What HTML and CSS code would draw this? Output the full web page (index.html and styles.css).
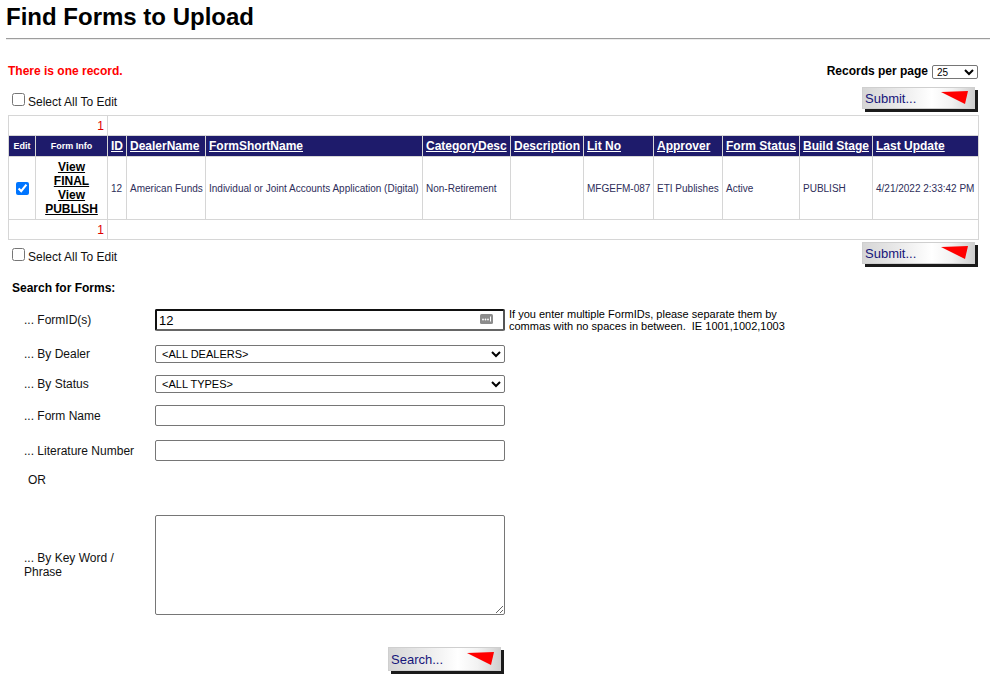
FILE: index.html
```html
<!DOCTYPE html>
<html>
<head>
<meta charset="utf-8">
<title>Find Forms to Upload</title>
<link rel="stylesheet" href="styles.css">
</head>
<body>
<h1 class="title">Find Forms to Upload</h1>
<div class="rule"></div>
<div class="content">
  <div class="toolbar">
    <span class="msg">There is one record.</span>
    <label class="rpp"><span>Records per page</span><select class="rpp-select"><option>25</option><option>50</option><option>100</option></select></label>
  </div>

  <div class="actions">
    <label class="selall"><input type="checkbox"><span>Select All To Edit</span></label>
    <button class="fancy" type="button"><span>Submit...</span><svg class="wedge" width="27" height="13" viewBox="0 0 27 13"><polygon points="0,1 27,0 24,13" fill="#ff0000"/></svg></button>
  </div>

  <table class="grid">
    <colgroup>
      <col class="w-edit"><col class="w-info"><col class="w-id"><col class="w-dealer"><col class="w-short"><col class="w-cat"><col class="w-desc"><col class="w-lit"><col class="w-appr"><col class="w-status"><col class="w-stage"><col class="w-upd">
    </colgroup>
    <tr class="pager"><td colspan="2" class="pg">1</td><td colspan="10"></td></tr>
    <tr class="head">
      <th class="mini">Edit</th>
      <th class="mini">Form Info</th>
      <th><a href="#">ID</a></th>
      <th><a href="#">DealerName</a></th>
      <th><a href="#">FormShortName</a></th>
      <th><a href="#">CategoryDesc</a></th>
      <th><a href="#">Description</a></th>
      <th><a href="#">Lit No</a></th>
      <th><a href="#">Approver</a></th>
      <th><a href="#">Form Status</a></th>
      <th><a href="#">Build Stage</a></th>
      <th><a href="#">Last Update</a></th>
    </tr>
    <tr class="data">
      <td class="center"><input type="checkbox" checked></td>
      <td class="center info"><a href="#">View<br>FINAL</a><br><a href="#">View<br>PUBLISH</a></td>
      <td>12</td>
      <td>American Funds</td>
      <td>Individual or Joint Accounts Application (Digital)</td>
      <td>Non-Retirement</td>
      <td></td>
      <td>MFGEFM-087</td>
      <td>ETI Publishes</td>
      <td>Active</td>
      <td>PUBLISH</td>
      <td>4/21/2022 2:33:42 PM</td>
    </tr>
    <tr class="pager"><td colspan="2" class="pg">1</td><td colspan="10"></td></tr>
  </table>

  <div class="actions actions-bottom">
    <label class="selall"><input type="checkbox"><span>Select All To Edit</span></label>
    <button class="fancy" type="button"><span>Submit...</span><svg class="wedge" width="27" height="13" viewBox="0 0 27 13"><polygon points="0,1 27,0 24,13" fill="#ff0000"/></svg></button>
  </div>

  <div class="search-head">Search for Forms:</div>

  <div class="row row-id">
    <div class="lbl">... FormID(s)</div>
    <div class="ctl">
      <input class="txt focus" type="text" value="12">
      <span class="pm-icon"><svg width="13" height="10" viewBox="0 0 13 10"><rect x="0" y="0" width="13" height="10" rx="1.5" fill="#8c8c8c"/><circle cx="3" cy="5.5" r="0.9" fill="#fff"/><circle cx="5.5" cy="5.5" r="0.9" fill="#fff"/><circle cx="8" cy="5.5" r="0.9" fill="#fff"/><rect x="10" y="2.5" width="1" height="5" fill="#fff"/></svg></span>
    </div>
    <div class="help">If you enter multiple FormIDs, please separate them by commas with no spaces in between.&nbsp; IE 1001,1002,1003</div>
  </div>

  <div class="row row-dealer">
    <div class="lbl">... By Dealer</div>
    <select class="sel"><option>&lt;ALL DEALERS&gt;</option></select>
  </div>

  <div class="row row-status">
    <div class="lbl">... By Status</div>
    <select class="sel"><option>&lt;ALL TYPES&gt;</option></select>
  </div>

  <div class="row row-name">
    <div class="lbl">... Form Name</div>
    <input class="txt" type="text">
  </div>

  <div class="row row-lit">
    <div class="lbl">... Literature Number</div>
    <input class="txt" type="text">
  </div>

  <div class="or">OR</div>

  <div class="row row-key">
    <div class="lbl">... By Key Word / Phrase</div>
    <textarea class="area"></textarea>
  </div>

  <div class="search-row">
    <button class="fancy tall" type="button"><span>Search...</span><svg class="wedge" width="27" height="13" viewBox="0 0 27 13"><polygon points="0,1 27,0 24,13" fill="#ff0000"/></svg></button>
  </div>
</div>
</body>
</html>
```

FILE: styles.css
```css
* { box-sizing: border-box; }

body {
  margin: 0;
  font-family: "Liberation Sans", Arial, sans-serif;
  color: #000;
  background: #fff;
}

.title {
  margin: 3px 0 0 6px;
  font-size: 24px;
  line-height: 27px;
  font-weight: bold;
}

.rule {
  margin: 8px 0 0 6px;
  border-top: 1px solid #9d9d9d;
  border-bottom: 1px solid #ececec;
}

.content {
  margin-left: 8px;
  width: 970px;
}

.toolbar {
  display: flex;
  justify-content: space-between;
  align-items: flex-start;
  margin-top: 24px;
}

.msg {
  color: #ff0000;
  font-weight: bold;
  font-size: 12px;
  line-height: 14px;
}

.rpp {
  display: flex;
  align-items: flex-start;
  font-weight: bold;
  font-size: 12px;
  line-height: 14px;
}

.rpp-select {
  margin: 1px 0 0 4px;
  width: 46px;
  height: 14px;
  font-family: "Liberation Sans", Arial, sans-serif;
  font-size: 10px;
  padding: 0;
  border: 1px solid #767676;
  border-radius: 2px;
  background: #fff;
  color: #000;
}

.actions {
  display: flex;
  justify-content: space-between;
  align-items: center;
  margin-top: 8px;
  height: 25px;
}

.actions-bottom {
  margin-top: 2px;
}

.selall {
  display: flex;
  align-items: center;
  font-size: 12px;
  line-height: 14px;
  color: #111;
}

.selall input {
  margin: 3px 3px 3px 4px;
}

.selall span {
  padding-top: 4px;
}

.fancy {
  display: flex;
  align-items: center;
  justify-content: space-between;
  width: 113px;
  height: 22px;
  margin: 0 3px 3px 0;
  padding: 0 6px 0 2px;
  border: 1px solid #cfcfcf;
  border-radius: 0;
  background: linear-gradient(to right, #d6d6d6 0%, #ececec 35%, #ffffff 62%, #f2f2f2 80%, #cfcfcf 100%);
  box-shadow: 3px 3px 0 #1b1b1b;
  font-family: "Liberation Sans", Arial, sans-serif;
  font-size: 13px;
  line-height: 14px;
  color: #16157a;
  cursor: pointer;
}

.fancy span {
  padding-top: 1px;
}

.wedge {
  display: block;
  margin-top: -1px;
}

.tall {
  height: 24px;
}

.grid {
  border-collapse: collapse;
  table-layout: fixed;
  width: 970px;
  margin-top: 3px;
  font-size: 10px;
  color: #2e2e5a;
}

.grid td,
.grid th {
  border: 1px solid #d6d6d6;
  padding: 0 3px;
  overflow: hidden;
}

.w-edit { width: 27px; }
.w-info { width: 72px; }
.w-id { width: 19px; }
.w-dealer { width: 79px; }
.w-short { width: 217px; }
.w-cat { width: 88px; }
.w-desc { width: 73px; }
.w-lit { width: 70px; }
.w-appr { width: 69px; }
.w-status { width: 77px; }
.w-stage { width: 73px; }
.w-upd { width: 106px; }

.grid .pager td {
  height: 20px;
}

.grid .pg {
  text-align: right;
  color: #e00000;
  font-size: 12px;
  padding-right: 3px;
}

.grid .head th {
  background: #1e1b6b;
  height: 21px;
  text-align: left;
  font-size: 12px;
  font-weight: bold;
  white-space: nowrap;
  color: #fff;
}

.grid .head th a {
  color: #fff;
  text-decoration: underline;
}

.grid .head th.mini {
  text-align: center;
  font-size: 9px;
  padding: 0;
}

.grid .data td {
  height: 63px;
  white-space: nowrap;
  vertical-align: middle;
}

.grid .center {
  text-align: center;
}

.grid .data input {
  margin: 0;
  vertical-align: middle;
}

.grid .info {
  font-size: 12px;
  line-height: 14px;
  font-weight: bold;
}

.grid .info a {
  color: #000;
  text-decoration: underline;
}

.search-head {
  margin: 14px 0 0 4px;
  font-size: 12px;
  line-height: 14px;
  font-weight: bold;
}

.row {
  display: flex;
  align-items: center;
}

.lbl {
  flex: 0 0 147px;
  padding: 0 16px;
  font-size: 12px;
  line-height: 14px;
  color: #111;
}

.row-id { margin-top: 14px; height: 22px; }
.row-dealer { margin-top: 14px; }
.row-status { margin-top: 12px; }
.row-name { margin-top: 12px; }
.row-lit { margin-top: 14px; }
.row-key { margin-top: 28px; }

.ctl {
  position: relative;
  width: 350px;
  height: 22px;
}

.txt {
  display: block;
  width: 350px;
  height: 21px;
  margin: 0;
  padding: 1px 2px;
  border: 1px solid #767676;
  border-radius: 2px;
  font-family: "Liberation Sans", Arial, sans-serif;
  font-size: 13px;
  color: #000;
  background: #fff;
}

.txt.focus {
  height: 22px;
  border: 2px solid;
  border-color: #111 #555 #666 #111;
  outline: none;
}

.pm-icon {
  position: absolute;
  right: 12px;
  top: 5px;
  width: 13px;
  height: 10px;
  line-height: 0;
}

.help {
  margin-left: 4px;
  width: 290px;
  font-size: 11px;
  line-height: 12px;
  color: #000;
}

.sel {
  display: block;
  width: 350px;
  height: 18px;
  margin: 0;
  padding: 0 0 0 2px;
  border: 1px solid #767676;
  border-radius: 2px;
  font-family: "Liberation Sans", Arial, sans-serif;
  font-size: 11px;
  color: #000;
  background: #fff;
}

.or {
  margin-top: 12px;
  padding-left: 20px;
  font-size: 12px;
  line-height: 14px;
  color: #111;
}

.area {
  display: block;
  width: 350px;
  height: 100px;
  margin: 0;
  border: 1px solid #767676;
  border-radius: 2px;
  font-family: "Liberation Sans", Arial, sans-serif;
  font-size: 13px;
}

.search-row {
  margin: 32px 0 0 380px;
}
```
